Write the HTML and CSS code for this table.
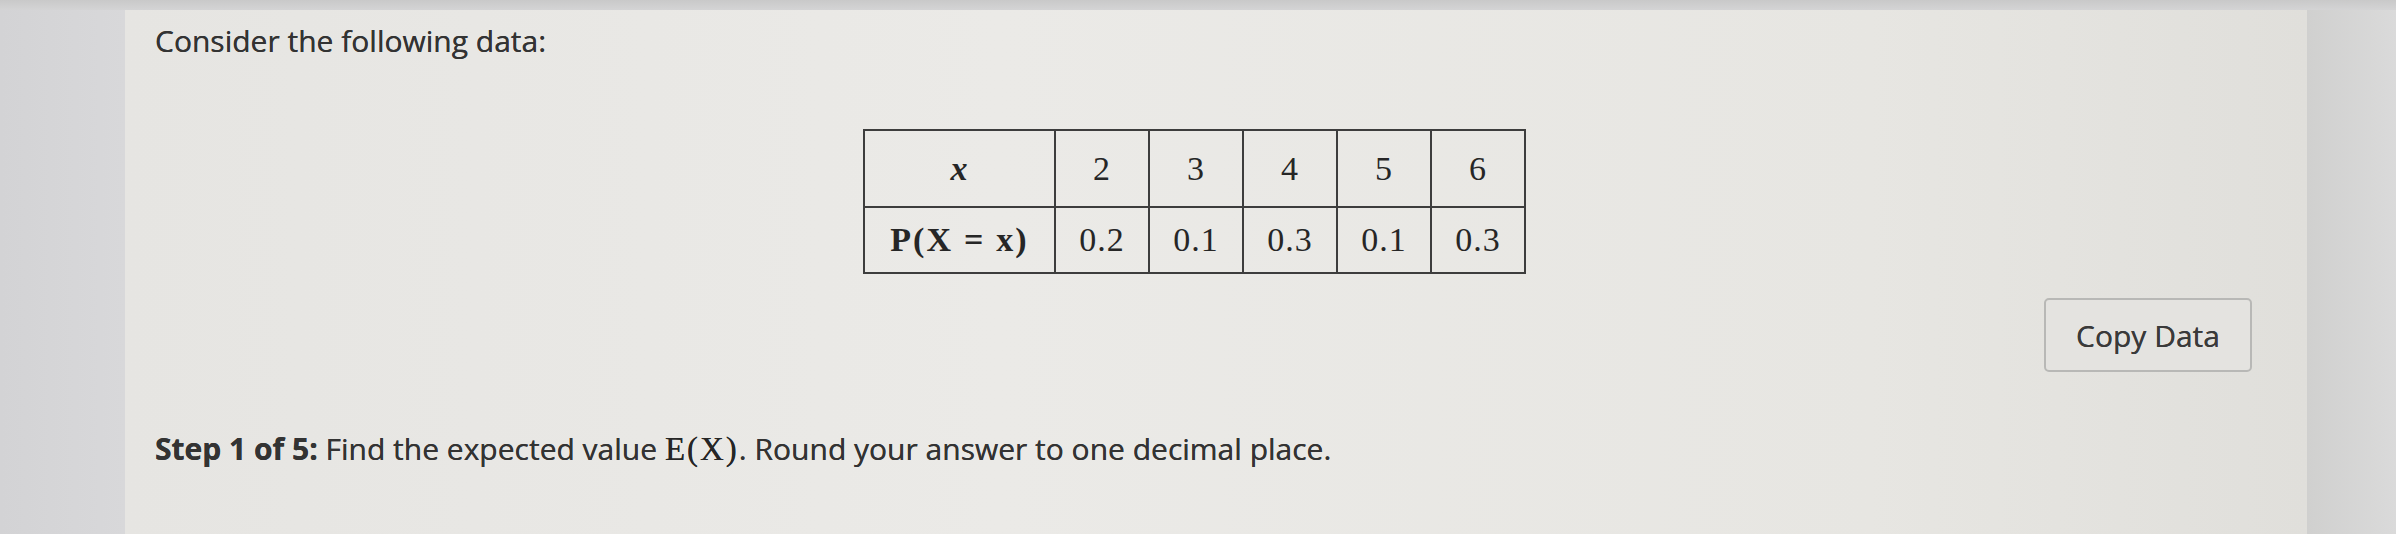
FILE: index.html
```html
<!DOCTYPE html>
<html>
<head>
<meta charset="utf-8">
<link rel="stylesheet" href="styles.css">
</head>
<body>
<div class="screen">
  <div class="side side-left"></div>
  <main class="panel">
    <p class="intro">Consider the following data:</p>
    <table class="data">
      <tr class="row-x">
        <td class="head"><i>x</i></td>
        <td>2</td><td>3</td><td>4</td><td>5</td><td>6</td>
      </tr>
      <tr class="row-p">
        <td class="head"><b class="px">P(X<span class="sp">=</span>x)</b></td>
        <td>0.2</td><td>0.1</td><td>0.3</td><td>0.1</td><td>0.3</td>
      </tr>
    </table>
    <div class="actions">
      <button class="copy">Copy Data</button>
    </div>
    <p class="step"><b>Step 1 of 5:</b> Find the expected value <span class="math">E(X)</span>. Round your answer to one decimal place.</p>
  </main>
  <div class="side side-right"></div>
</div>
</body>
</html>
```
FILE: styles.css
```css
html, body {
  margin: 0;
  padding: 0;
  height: 100%;
  background: #d2d2d3;
}
.screen {
  display: flex;
  height: 534px;
  width: 2396px;
  padding-top: 10px;
  box-sizing: border-box;
  background: linear-gradient(#c9c9c9, #d4d4d5 10px);
}
.side-left {
  width: 125px;
  flex: none;
  background: linear-gradient(90deg, #d3d3d5, #d8d8da);
}
.side-right {
  width: 89px;
  flex: none;
  background: linear-gradient(90deg, #d0d0cf, #dadada);
}
.panel {
  flex: 1;
  background: linear-gradient(90deg, #e6e5e2, #ebeae7 40%, #e7e6e2 80%, #e0dfdb);
  padding: 11px 55px 0 30px;
  font-family: "Open Sans", sans-serif;
  font-size: 30px;
  color: #333;
}
.intro {
  margin: 0;
  line-height: 40px;
  text-shadow: 0 0 0.6px #333;
}
.data {
  margin: 68px 0 0 708px;
  border-collapse: collapse;
  font-family: "Liberation Serif", serif;
  font-size: 34px;
  color: #262626;
  letter-spacing: 1px;
}
.data td {
  border: 2px solid #3d3d3d;
  text-align: center;
  padding: 0;
  width: 92px;
}
.data td.head {
  width: 189px;
}
.data i {
  font-weight: bold;
}
.px {
  letter-spacing: 2px;
}
.row-x td {
  height: 75px;
}
.row-p td {
  height: 64px;
}
.sp {
  padding: 0 11px;
}
.actions {
  display: flex;
  justify-content: flex-end;
  margin-top: 24px;
}
.copy {
  width: 208px;
  height: 74px;
  font-family: "Open Sans", sans-serif;
  font-size: 30px;
  color: #3a3a3a;
  background: #e4e3e0;
  border: 2px solid #b8b8b6;
  border-radius: 5px;
  padding: 0;
  text-shadow: 0 0 0.6px #3a3a3a;
}
.step {
  margin: 57px 0 0;
  line-height: 40px;
  color: #333;
  text-shadow: 0 0 0.6px #333;
}
.math {
  font-family: "Liberation Serif", serif;
  font-size: 33px;
  letter-spacing: 2px;
  color: #262626;
}
```
